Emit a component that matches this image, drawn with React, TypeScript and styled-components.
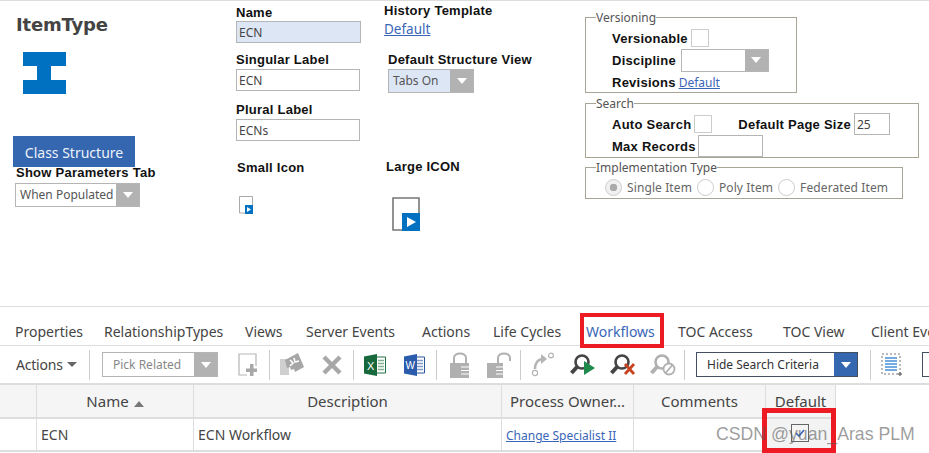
import React from 'react';
import styled, { createGlobalStyle } from 'styled-components';

const GlobalStyle = createGlobalStyle`
  html, body {
    margin: 0;
    padding: 0;
    background: #fff;
    overflow: hidden;
  }
  body {
    font-family: "Noto Sans", "Open Sans", sans-serif;
    color: #333;
  }
`;

const Page = styled.div`
  position: relative;
  width: 929px;
  height: 453px;
  overflow: hidden;
  border-top: 1px solid #ddd;
  box-sizing: border-box;
`;

const FormArea = styled.div`
  display: flex;
  height: 305px;
  border-bottom: 1px solid #ddd;
  box-sizing: content-box;
`;

const LeftColumn = styled.div`
  width: 236px;
  flex: none;
  display: flex;
  flex-direction: column;
  align-items: flex-start;
  padding-left: 13px;
  box-sizing: border-box;
`;

const Title = styled.h1`
  margin: 13px 0 0 3px;
  font: bold 18px/22px "DejaVu Sans", sans-serif;
  letter-spacing: -0.2px;
  color: #444;
`;

const Logo = styled.svg`
  display: block;
  margin: 16px 0 0 10px;
`;

const ClassButton = styled.div`
  width: 122px;
  height: 31px;
  margin-top: 42px;
  background: #3566b0;
  color: #eef2fa;
  font-size: 14px;
  line-height: 34px;
  text-align: center;
`;

const Label = styled.div<{ $top?: number; $left?: number }>`
  font: bold 13px/15px "Liberation Sans", sans-serif;
  letter-spacing: 0.25px;
  color: #111;
  white-space: nowrap;
  margin-top: ${(p) => p.$top ?? 0}px;
  margin-left: ${(p) => p.$left ?? 0}px;
`;

const NameColumn = styled.div`
  width: 148px;
  flex: none;
  display: flex;
  flex-direction: column;
  align-items: flex-start;
`;

const MiddleColumn = styled.div`
  width: 201px;
  flex: none;
  display: flex;
  flex-direction: column;
  align-items: flex-start;
`;

const TextInput = styled.div<{ $w: number; $h?: number; $tinted?: boolean; $top?: number }>`
  width: ${(p) => p.$w}px;
  height: ${(p) => p.$h ?? 22}px;
  margin-top: ${(p) => p.$top ?? 0}px;
  box-sizing: border-box;
  border: 1px solid #b5b5b5;
  background: ${(p) => (p.$tinted ? '#dde6f5' : '#fff')};
  padding-left: 2px;
  font-size: 12px;
  line-height: 21px;
  color: #444;
`;

const SelectBox = styled.div<{ $w: number; $h?: number; $tinted?: boolean; $top?: number; $left?: number }>`
  display: flex;
  width: ${(p) => p.$w}px;
  height: ${(p) => p.$h ?? 24}px;
  margin-top: ${(p) => p.$top ?? 0}px;
  margin-left: ${(p) => p.$left ?? 0}px;
  box-sizing: border-box;
  border: 1px solid #b5b5b5;
  background: ${(p) => (p.$tinted ? '#dde6f5' : '#fff')};
  font-size: 12px;
  line-height: 22px;
  color: #555;
`;

const SelectText = styled.span`
  flex: 1;
  padding-left: 4px;
  white-space: nowrap;
  overflow: hidden;
`;

const SelectArrow = styled.span<{ $w?: number; $blue?: boolean }>`
  flex: none;
  width: ${(p) => p.$w ?? 23}px;
  display: flex;
  align-items: center;
  justify-content: center;
  background: ${(p) => (p.$blue ? '#3566b0' : '#b2b2b2')};
  &::after {
    content: '';
    border-left: 5px solid transparent;
    border-right: 5px solid transparent;
    border-top: 6px solid #fff;
  }
`;

const TextLink = styled.a<{ $size: number; $top?: number; $left?: number }>`
  display: inline-block;
  color: #3a66b8;
  text-decoration: underline;
  font-size: ${(p) => p.$size}px;
  margin-top: ${(p) => p.$top ?? 0}px;
  margin-left: ${(p) => p.$left ?? 0}px;
  white-space: nowrap;
`;

const IconHolder = styled.div<{ $top: number; $left: number }>`
  margin-top: ${(p) => p.$top}px;
  margin-left: ${(p) => p.$left}px;
  line-height: 0;
`;

const FieldColumn = styled.div`
  flex: none;
  display: flex;
  flex-direction: column;
  align-items: flex-start;
`;

const Group = styled.fieldset<{ $w: number; $h: number; $top: number; $pt?: number }>`
  width: ${(p) => p.$w}px;
  height: ${(p) => p.$h}px;
  margin: ${(p) => p.$top}px 0 0;
  padding: ${(p) => p.$pt ?? 2}px 0 0 26px;
  box-sizing: border-box;
  border: 1px solid #a8a595;
  min-inline-size: 0;
`;

const GroupTitle = styled.legend`
  margin-left: 4px;
  padding: 0;
  font-size: 12px;
  line-height: 15px;
  color: #555;
  margin-inline-start: -16px;
`;

const FieldRow = styled.div<{ $h: number; $gap?: number }>`
  display: flex;
  align-items: center;
  height: ${(p) => p.$h}px;
  gap: ${(p) => p.$gap ?? 3}px;
`;

const CheckSquare = styled.div`
  width: 18px;
  height: 18px;
  box-sizing: border-box;
  border: 1px solid #ccc;
  background: #fff;
`;

const RadioRow = styled.div`
  display: flex;
  align-items: center;
  height: 18px;
  margin-left: -7px;
  gap: 5px;
  font-size: 12px;
  letter-spacing: 0.1px;
  color: #666;
`;

const Radio = styled.span<{ $checked?: boolean }>`
  width: 17px;
  height: 17px;
  border-radius: 50%;
  box-sizing: border-box;
  border: 1px solid #ccc;
  background: ${(p) => (p.$checked ? 'radial-gradient(circle, #aaa 0 3.5px, #f0f0f0 4px)' : '#fff')};
`;

const TabBar = styled.div`
  display: flex;
  height: 38px;
  padding-left: 15px;
  gap: 25px;
  border-bottom: 1px solid #ddd;
  box-sizing: content-box;
`;

const Tab = styled.div<{ $w: number; $active?: boolean }>`
  flex: none;
  width: ${(p) => p.$w}px;
  font-size: 14px;
  line-height: 49px;
  height: 38px;
  white-space: nowrap;
  color: ${(p) => (p.$active ? '#3a66b8' : '#444')};
`;

const RedBox = styled.div<{ $l: number; $t: number; $w: number; $h: number; $b: number }>`
  position: absolute;
  left: ${(p) => p.$l}px;
  top: ${(p) => p.$t}px;
  width: ${(p) => p.$w}px;
  height: ${(p) => p.$h}px;
  box-sizing: border-box;
  border: ${(p) => p.$b}px solid #ed1c24;
`;

const Toolbar = styled.div`
  display: flex;
  align-items: center;
  height: 37px;
  border-bottom: 2px solid #ddd;
  box-sizing: content-box;
  font-size: 14px;
`;

const ActionsMenu = styled.div`
  display: flex;
  align-items: center;
  width: 89px;
  flex: none;
  padding-left: 16px;
  box-sizing: border-box;
  gap: 4px;
  color: #444;
  letter-spacing: -0.2px;
  &::after {
    content: '';
    border-left: 5px solid transparent;
    border-right: 5px solid transparent;
    border-top: 5px solid #666;
  }
`;

const Sep = styled.div`
  flex: none;
  width: 1px;
  height: 30px;
  background: #ccc;
`;

const ToolGroup = styled.div<{ $gap: number; $pl: number; $pr: number }>`
  display: flex;
  align-items: center;
  flex: none;
  gap: ${(p) => p.$gap}px;
  padding: 0 ${(p) => p.$pr}px 0 ${(p) => p.$pl}px;
  svg {
    display: block;
    flex: none;
  }
`;

const ToolSelect = styled.div<{ $w: number; $dark?: boolean }>`
  display: flex;
  flex: none;
  width: ${(p) => p.$w}px;
  height: 25px;
  box-sizing: border-box;
  border: 1px solid ${(p) => (p.$dark ? '#44505f' : '#b5b5b5')};
  font-size: 12px;
  line-height: 23px;
  color: ${(p) => (p.$dark ? '#333' : '#888')};
`;

const ToolSelectText = styled.span<{ $pl: number }>`
  flex: 1;
  padding-left: ${(p) => p.$pl}px;
  white-space: nowrap;
`;

const CutOffBox = styled.div`
  flex: none;
  width: 20px;
  height: 25px;
  margin-left: 19px;
  box-sizing: border-box;
  border: 1px solid #44505f;
`;

const GridRow = styled.div<{ $h: number }>`
  display: grid;
  grid-template-columns: 37px 157px 308px 132px 132px 70px;
  width: 836px;
  height: ${(p) => p.$h}px;
  box-sizing: border-box;
  border-bottom: 2px solid #ddd;
`;

const HeadCell = styled.div`
  background: #f5f5f5;
  border-right: 1px solid #ddd;
  font-size: 15px;
  line-height: 33px;
  text-align: center;
  color: #444;
  white-space: nowrap;
  overflow: hidden;
`;

const Cell = styled.div`
  border-right: 1px solid #ddd;
  background: #fff;
  font-size: 14px;
  line-height: 31px;
  padding-left: 4px;
  color: #444;
  white-space: nowrap;
  overflow: hidden;
`;

const CheckCell = styled.div`
  display: flex;
  justify-content: center;
  padding: 5px 2px 0 0;
  background: #f3f3f3;
`;

const CheckBox = styled.div`
  width: 18px;
  height: 18px;
  box-sizing: border-box;
  border: 1px solid #666;
  background: #f5f5f5;
  display: flex;
  align-items: center;
  justify-content: center;
`;

const SortArrow = styled.span`
  display: inline-block;
  margin-left: 5px;
  border-left: 5px solid transparent;
  border-right: 5px solid transparent;
  border-bottom: 6px solid #777;
`;

const Watermark = styled.div`
  position: absolute;
  left: 716px;
  top: 421px;
  font: 17.7px/24px "Liberation Sans", sans-serif;
  color: rgba(90, 90, 90, 0.6);
  white-space: nowrap;
`;

const FileIcon = ({ big }: { big?: boolean }) =>
  big ? (
    <svg width="28" height="34" viewBox="0 0 28 34">
      <path d="M10 33H1V1h26v15" fill="none" stroke="#777" strokeWidth="1.6" />
      <rect x="10" y="16" width="18" height="18" fill="#0070c0" />
      <path d="M15 20l9 5-9 5z" fill="#fff" />
    </svg>
  ) : (
    <svg width="14" height="18" viewBox="0 0 14 18">
      <path d="M6 17H.5V.5h13V9" fill="none" stroke="#aaa" />
      <rect x="6" y="9" width="8" height="9" fill="#0070c0" />
      <path d="M8 11l4 2.5L8 16z" fill="#fff" />
    </svg>
  );

const AddIcon = () => (
  <svg width="19" height="24" viewBox="0 0 19 24">
    <path d="M9 22H1V1h17v12" fill="none" stroke="#b5b5b5" strokeWidth="1.2" />
    <path d="M12 11h3.500v4.500H19v3.500h-3.500V23H12v-4H8v-3.500h4z" fill="#a8a8a8" />
  </svg>
);

const PuzzleIcon = () => (
  <svg width="24" height="26" viewBox="0 0 24 26">
    <rect x="0" y="7" width="9" height="16" fill="#cfcfcf" />
    <path d="M5 8l13-7 6 14-9 5-1-3-3 1-1-3-3 1z" fill="#a6a6a6" />
    <path d="M10 8l3 3-3 3M14 6l1 4 4-1" fill="none" stroke="#fff" strokeWidth="1.600" />
  </svg>
);

const CrossIcon = () => (
  <svg width="20" height="20" viewBox="0 0 20 20">
    <path d="M2 2l16 16M18 2L2 18" stroke="#a8a8a8" strokeWidth="4.400" />
  </svg>
);

const ExcelIcon = () => (
  <svg width="22" height="22" viewBox="0 0 22 22">
    <path d="M12 3h9.500v16H12z" fill="#fff" stroke="#1e7145" />
    <path d="M14 6.500h6M14 9.500h6M14 12.500h6M14 15.500h6" stroke="#7fb08f" strokeWidth="1.400" />
    <path d="M0 2.500L13 0v22L0 19.500z" fill="#17683b" />
    <text x="3" y="15.500" fontSize="11" fill="#fff" fontFamily="Liberation Sans">X</text>
  </svg>
);

const WordIcon = () => (
  <svg width="21" height="22" viewBox="0 0 21 22">
    <path d="M11 3h9.500v16H11z" fill="#fff" stroke="#2b579a" />
    <path d="M13 6.500h6M13 9.500h6M13 12.500h6M13 15.500h6" stroke="#7f9cc8" strokeWidth="1.400" />
    <path d="M0 2.500L13 0v22L0 19.500z" fill="#2b5cab" />
    <text x="1.500" y="15" fontSize="10" fill="#fff" fontFamily="Liberation Sans">W</text>
  </svg>
);

const LockIcon = () => (
  <svg width="20" height="26" viewBox="0 0 20 26">
    <path d="M4 11V6c0-6 12-6 12 0v5" fill="none" stroke="#b0b0b0" strokeWidth="2" />
    <path d="M0 11h19v15H0z" fill="#b0b0b0" />
    <path d="M11 15h8M11 18.500h8M11 22h8" stroke="#fff" strokeWidth="1.200" />
  </svg>
);

const OpenLockIcon = () => (
  <svg width="24" height="26" viewBox="0 0 24 26">
    <path d="M11 11V6c0-6 12-6 12 0v3" fill="none" stroke="#b0b0b0" strokeWidth="2" />
    <path d="M0 11h16v15H0z" fill="#b0b0b0" />
    <path d="M9 15h7M9 18.500h7M9 22h7" stroke="#fff" strokeWidth="1.200" />
  </svg>
);

const RouteIcon = () => (
  <svg width="25" height="25" viewBox="0 0 25 25">
    <circle cx="4" cy="21" r="2.600" fill="none" stroke="#b5b5b5" strokeWidth="1.200" />
    <circle cx="20" cy="3.500" r="2.400" fill="none" stroke="#b5b5b5" strokeWidth="1.200" />
    <path d="M4 17c0-6 2-9 7-10" fill="none" stroke="#b5b5b5" strokeWidth="2.600" />
    <path d="M10 2l6 5-6 5z" fill="#b5b5b5" />
  </svg>
);

const SearchIcon = ({ tone, badge }: { tone: string; badge: 'run' | 'stop' | 'none' }) => (
  <svg width="26" height="24" viewBox="0 0 26 24">
    <circle cx="12" cy="9" r="6.500" fill="none" stroke={tone} strokeWidth="2.600" />
    <path d="M7 14L1.500 20" stroke={tone} strokeWidth="4" />
    {badge === 'run' && <path d="M14 8l11 7-11 7z" fill="#1f8a4c" />}
    {badge === 'stop' && <path d="M15 11l9 10M24 11l-9 10" stroke="#c8431f" strokeWidth="2.800" />}
    {badge === 'none' && (
      <g fill="#fff" stroke="#b0b0b0" strokeWidth="1.800">
        <circle cx="19" cy="16" r="5.500" />
        <path d="M15.500 20l7-8" />
      </g>
    )}
  </svg>
);

const ListIcon = () => (
  <svg width="22" height="24" viewBox="0 0 22 24">
    <rect x="1" y="1" width="18" height="20" fill="none" stroke="#777" strokeDasharray="2 2" />
    <path d="M4 5h12M4 8h12M4 11h12M4 14h12M4 17h12" stroke="#4a90d9" strokeWidth="1.600" />
    <path d="M19 19v4M17 21h4" stroke="#777" strokeWidth="1.400" />
  </svg>
);

const tabs = [
  { label: 'Properties', w: 64 },
  { label: 'RelationshipTypes', w: 116 },
  { label: 'Views', w: 36 },
  { label: 'Server Events', w: 91 },
  { label: 'Actions', w: 46 },
  { label: 'Life Cycles', w: 68 },
  { label: 'Workflows', w: 67, active: true },
  { label: 'TOC Access', w: 80 },
  { label: 'TOC View', w: 63 },
  { label: 'Client Events', w: 90 },
];

export default function App() {
  return (
    <Page>
      <GlobalStyle />
      <FormArea>
        <LeftColumn>
          <Title>ItemType</Title>
          <Logo width="43" height="42" viewBox="0 0 43 42">
            <path d="M0 0h43v14H28v14h15v14H0V28h14V14H0z" fill="#0070c0" />
          </Logo>
          <ClassButton>Class Structure</ClassButton>
          <Label $top={-2} $left={3}>Show Parameters Tab</Label>
          <SelectBox $w={125} $top={3} $left={2}>
            <SelectText>When Populated</SelectText>
            <SelectArrow />
          </SelectBox>
        </LeftColumn>
        <NameColumn>
          <Label $top={4}>Name</Label>
          <TextInput $w={125} $tinted $top={1}>ECN</TextInput>
          <Label $top={9}>Singular Label</Label>
          <TextInput $w={124} $top={2}>ECN</TextInput>
          <Label $top={11}>Plural Label</Label>
          <TextInput $w={124} $top={2}>ECNs</TextInput>
          <Label $top={19} $left={1}>Small Icon</Label>
          <IconHolder $top={21} $left={3}><FileIcon /></IconHolder>
        </NameColumn>
        <MiddleColumn>
          <Label $top={2}>History Template</Label>
          <TextLink $size={13.5} $top={2}>Default</TextLink>
          <Label $top={14} $left={4}>Default Structure View</Label>
          <SelectBox $w={86} $tinted $top={2} $left={4}>
            <SelectText>Tabs On</SelectText>
            <SelectArrow />
          </SelectBox>
          <Label $top={66} $left={2}>Large ICON</Label>
          <IconHolder $top={23} $left={8}><FileIcon big /></IconHolder>
        </MiddleColumn>
        <FieldColumn>
          <Group $w={212} $h={83} $top={9}>
            <GroupTitle>Versioning</GroupTitle>
            <FieldRow $h={22}>
              <Label>Versionable</Label>
              <CheckSquare />
            </FieldRow>
            <FieldRow $h={22} $gap={5}>
              <Label>Discipline</Label>
              <SelectBox $w={88} $h={23}>
                <SelectText />
                <SelectArrow />
              </SelectBox>
            </FieldRow>
            <FieldRow $h={22} $gap={3}>
              <Label>Revisions</Label>
              <TextLink $size={12}>Default</TextLink>
            </FieldRow>
          </Group>
          <Group $w={334} $h={62} $top={3}>
            <GroupTitle>Search</GroupTitle>
            <FieldRow $h={22}>
              <Label>Auto Search</Label>
              <CheckSquare />
              <Label $left={23}>Default Page Size</Label>
              <TextInput $w={36} $h={22}>25</TextInput>
            </FieldRow>
            <FieldRow $h={22} $gap={2}>
              <Label>Max Records</Label>
              <TextInput $w={65} $h={22} />
            </FieldRow>
          </Group>
          <Group $w={318} $h={39} $top={2} $pt={3}>
            <GroupTitle>Implementation Type</GroupTitle>
            <RadioRow>
              <Radio $checked />
              <span>Single Item</span>
              <Radio />
              <span>Poly Item</span>
              <Radio />
              <span>Federated Item</span>
            </RadioRow>
          </Group>
        </FieldColumn>
      </FormArea>

      <TabBar>
        {tabs.map((t) => (
          <Tab key={t.label} $w={t.w} $active={t.active}>
            {t.label}
          </Tab>
        ))}
      </TabBar>

      <Toolbar>
        <ActionsMenu>Actions</ActionsMenu>
        <Sep />
        <ToolGroup $gap={0} $pl={12} $pr={20}>
          <ToolSelect $w={116}>
            <ToolSelectText $pl={10}>Pick Related</ToolSelectText>
            <SelectArrow />
          </ToolSelect>
        </ToolGroup>
        <ToolGroup $gap={0} $pl={0} $pr={12}><AddIcon /></ToolGroup>
        <Sep />
        <ToolGroup $gap={18} $pl={10} $pr={11}><PuzzleIcon /><CrossIcon /></ToolGroup>
        <Sep />
        <ToolGroup $gap={18} $pl={10} $pr={11}><ExcelIcon /><WordIcon /></ToolGroup>
        <Sep />
        <ToolGroup $gap={17} $pl={13} $pr={9}><LockIcon /><OpenLockIcon /></ToolGroup>
        <Sep />
        <ToolGroup $gap={14} $pl={10} $pr={8}>
          <RouteIcon />
          <SearchIcon tone="#444" badge="run" />
          <SearchIcon tone="#444" badge="stop" />
          <SearchIcon tone="#b0b0b0" badge="none" />
        </ToolGroup>
        <Sep />
        <ToolGroup $gap={0} $pl={11} $pr={12}>
          <ToolSelect $w={162} $dark>
            <ToolSelectText $pl={10}>Hide Search Criteria</ToolSelectText>
            <SelectArrow $blue />
          </ToolSelect>
        </ToolGroup>
        <Sep />
        <ToolGroup $gap={0} $pl={10} $pr={0}><ListIcon /></ToolGroup>
        <CutOffBox />
      </Toolbar>

      <GridRow $h={34}>
        <HeadCell />
        <HeadCell>Name<SortArrow /></HeadCell>
        <HeadCell>Description</HeadCell>
        <HeadCell>Process Owner...</HeadCell>
        <HeadCell>Comments</HeadCell>
        <HeadCell>Default</HeadCell>
      </GridRow>
      <GridRow $h={33}>
        <Cell />
        <Cell>ECN</Cell>
        <Cell>ECN Workflow</Cell>
        <Cell><TextLink $size={12}>Change Specialist II</TextLink></Cell>
        <Cell />
        <CheckCell>
          <CheckBox>
            <svg width="12" height="10" viewBox="0 0 12 10">
              <path d="M2 5l3 3 5-6" fill="none" stroke="#3a66b8" strokeWidth="1.600" />
            </svg>
          </CheckBox>
        </CheckCell>
      </GridRow>

      <RedBox $l={580} $t={312} $w={84} $h={35} $b={4} />
      <RedBox $l={762} $t={407} $w={74} $h={45} $b={5} />
      <Watermark>CSDN @yuan_Aras PLM</Watermark>
    </Page>
  );
}
